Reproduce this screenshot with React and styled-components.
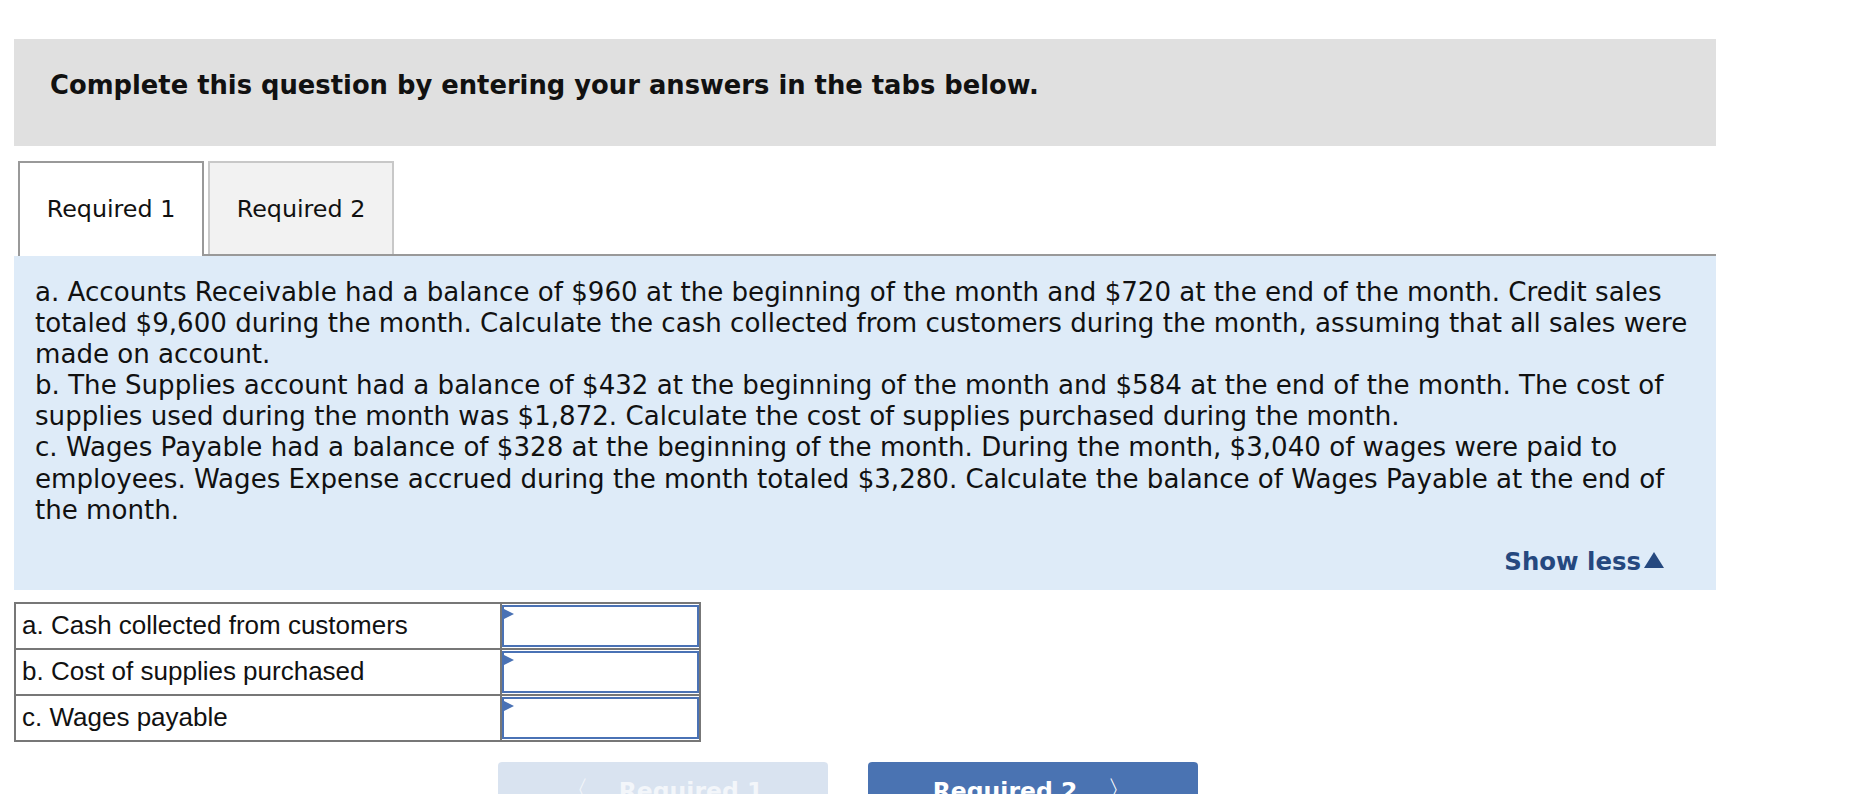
import React from "react";
import styled, { createGlobalStyle } from "styled-components";

const GlobalStyle = createGlobalStyle`
  html, body {
    margin: 0;
    padding: 0;
    background: #ffffff;
    overflow: hidden;
  }
  body {
    font-family: "DejaVu Sans", Verdana, sans-serif;
    color: #000;
  }
`;

const Page = styled.div`
  width: 1702px;
  padding: 39px 0 0 14px;
`;

const Header = styled.div`
  background: #e0e0e0;
  height: 107px;
  box-sizing: border-box;
  padding: 31px 36px 0;
  font-weight: bold;
  font-size: 25.8px;
  line-height: 30px;
  color: #111;
`;

const TabList = styled.div`
  display: flex;
  gap: 4px;
  margin: 15px 0 0 4px;
  border-bottom: 2px solid #999;
  height: 93px;
`;

const Tab = styled.div`
  box-sizing: border-box;
  width: 186px;
  height: ${(p) => (p.$active ? "95px" : "93px")};
  margin-bottom: ${(p) => (p.$active ? "-2px" : "0")};
  border: 2px solid ${(p) => (p.$active ? "#999" : "#c8c8c8")};
  border-bottom: none;
  background: ${(p) => (p.$active ? "#ffffff" : "#f2f2f2")};
  display: flex;
  align-items: center;
  justify-content: center;
  padding-bottom: ${(p) => (p.$active ? "2px" : "0")};
  font-size: 23.8px;
  color: #111;
`;

const Panel = styled.div`
  background: #deebf8;
  padding: 21px 16px 13px 21px;
  font-size: 26.1px;
  line-height: 31.1px;
  color: #111;
`;

const Para = styled.p`
  margin: 0;
`;

const ShowRow = styled.div`
  display: flex;
  justify-content: flex-end;
  align-items: center;
  margin-top: 20px;
  padding-right: 36px;
`;

const ShowLess = styled.span`
  display: flex;
  align-items: center;
  gap: 3px;
  font-weight: bold;
  color: #25487f;
  font-size: 24.4px;
`;

const UpTriangle = styled.span`
  width: 0;
  height: 0;
  border-left: 10.5px solid transparent;
  border-right: 10.5px solid transparent;
  border-bottom: 16px solid #25487f;
  margin-top: -2px;
`;

const Table = styled.table`
  margin-top: 12px;
  border-collapse: collapse;
  font-family: "Liberation Sans", Arial, sans-serif;
  font-size: 26px;
  color: #111;
`;

const LabelCell = styled.td`
  border: 2px solid #777;
  width: 486px;
  height: 44px;
  box-sizing: border-box;
  padding: 0 6px;
  white-space: nowrap;
`;

const InputCell = styled.td`
  border: 2px solid #777;
  width: 197px;
  height: 44px;
  padding: 0;
`;

const AnswerBox = styled.div`
  position: relative;
  box-sizing: border-box;
  height: 42px;
  border: 2px solid #4a72b5;
  background: #fff;
`;

const Marker = styled.span`
  position: absolute;
  top: 2px;
  left: 0;
  width: 0;
  height: 0;
  border-top: 5px solid transparent;
  border-bottom: 5px solid transparent;
  border-left: 10px solid #4a72b5;
`;

const ButtonRow = styled.div`
  display: flex;
  gap: 40px;
  margin: 20px 0 0 484px;
`;

const NavButton = styled.div`
  box-sizing: border-box;
  width: 330px;
  height: 58px;
  border-radius: 4px;
  background: ${(p) => (p.$disabled ? "#d9e3f0" : "#4a73b2")};
  color: ${(p) => (p.$disabled ? "#f3f6fa" : "#ffffff")};
  font-weight: bold;
  font-size: 23.5px;
  display: flex;
  align-items: center;
  justify-content: center;
  gap: 30px;
`;

const Chevron = styled.span`
  font-weight: normal;
  font-size: 26px;
`;

const rows = [
  "a. Cash collected from customers",
  "b. Cost of supplies purchased",
  "c. Wages payable",
];

export default function App() {
  return (
    <>
      <GlobalStyle />
      <Page>
        <Header>Complete this question by entering your answers in the tabs below.</Header>
        <TabList>
          <Tab $active>Required 1</Tab>
          <Tab>Required 2</Tab>
        </TabList>
        <Panel>
          <Para>
            a. Accounts Receivable had a balance of $960 at the beginning of the month and $720 at the end of the month. Credit sales totaled $9,600 during the month. Calculate the cash collected from customers during the month, assuming that all sales were made on account.
          </Para>
          <Para>
            b. The Supplies account had a balance of $432 at the beginning of the month and $584 at the end of the month. The cost of supplies used during the month was $1,872. Calculate the cost of supplies purchased during the month.
          </Para>
          <Para>
            c. Wages Payable had a balance of $328 at the beginning of the month. During the month, $3,040 of wages were paid to employees. Wages Expense accrued during the month totaled $3,280. Calculate the balance of Wages Payable at the end of the month.
          </Para>
          <ShowRow>
            <ShowLess>
              Show less
              <UpTriangle />
            </ShowLess>
          </ShowRow>
        </Panel>
        <Table>
          <tbody>
            {rows.map((r) => (
              <tr key={r}>
                <LabelCell>{r}</LabelCell>
                <InputCell>
                  <AnswerBox>
                    <Marker />
                  </AnswerBox>
                </InputCell>
              </tr>
            ))}
          </tbody>
        </Table>
        <ButtonRow>
          <NavButton $disabled>
            <Chevron>〈</Chevron>
            <span>Required 1</span>
          </NavButton>
          <NavButton>
            <span>Required 2</span>
            <Chevron>〉</Chevron>
          </NavButton>
        </ButtonRow>
      </Page>
    </>
  );
}
